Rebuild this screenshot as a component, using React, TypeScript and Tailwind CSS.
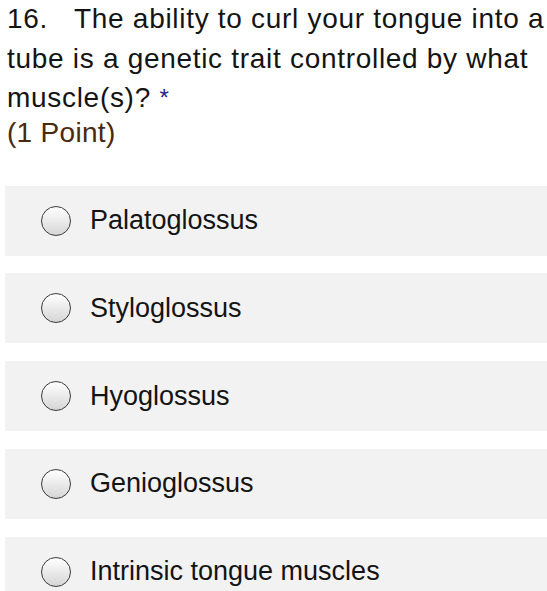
import React from "react";

const options = [
  "Palatoglossus",
  "Styloglossus",
  "Hyoglossus",
  "Genioglossus",
  "Intrinsic tongue muscles",
];

export default function App() {
  return (
    <div
      className="w-[547px] h-[591px] overflow-hidden bg-white text-[#141414]"
      style={{ fontFamily: '"Liberation Sans", Arial, sans-serif' }}
    >
      <div className="pl-[7px] pt-0 -mt-[1px]">
        <div className="text-[28px] leading-[39.5px] tracking-[0.7px]">
          <span className="mr-[26px]">16.</span>
          The ability to curl your tongue into a tube is a genetic trait controlled by what muscle(s)?{" "}
          <span className="text-[#25258f] text-[24px] align-top">*</span>
        </div>
        <div className="text-[28px] leading-[30px] text-[#4a2a0c] tracking-[0.3px]">(1 Point)</div>
      </div>
      <div className="mt-[38px] ml-[5px] flex flex-col gap-[17.75px]">
        {options.map((o) => (
          <div key={o} className="h-[70px] bg-[#f2f2f2] flex items-center pl-[36px]">
            <div className="w-[30px] h-[30px] rounded-full border-[1.5px] border-[#3a3a3a] bg-gradient-to-b from-white to-[#d6d6d6] shrink-0" />
            <span className="ml-[19px] text-[27px] leading-none">{o}</span>
          </div>
        ))}
      </div>
    </div>
  );
}
